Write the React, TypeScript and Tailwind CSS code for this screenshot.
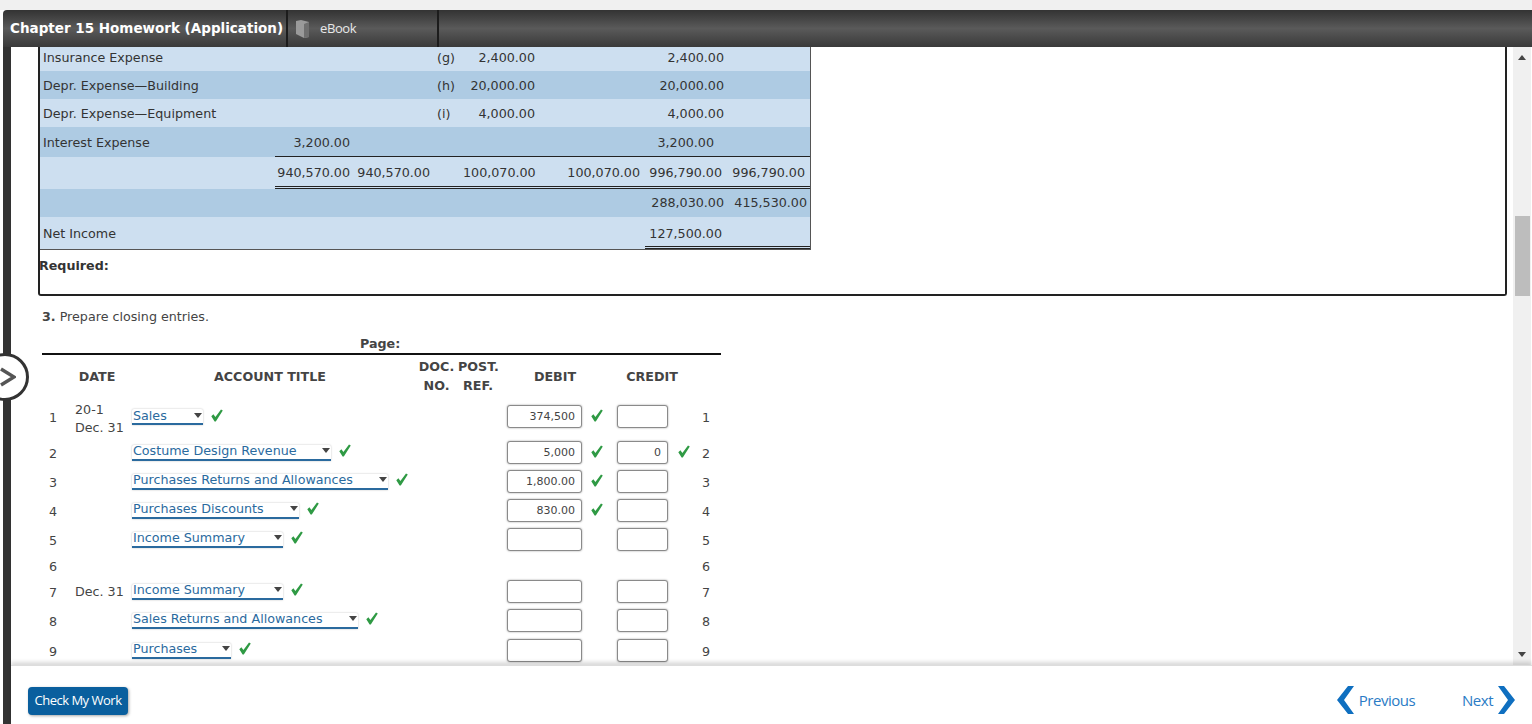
const font = "font-['DejaVu_Sans',Verdana,sans-serif]";

type WorkRow = {
  label?: string;
  h: string;
  bg: string;
  nudge?: string;
  cells: [string, string, string, string, string, string, string];
};

const LIGHT = 'bg-[#cddff0]';
const DARK = 'bg-[#aecbe3]';

const workRows: WorkRow[] = [
  { label: 'Insurance Expense', h: 'h-[24px]', bg: LIGHT, nudge: 'pb-[2px]', cells: ['', '', '(g)', '2,400.00', '', '2,400.00', ''] },
  { label: 'Depr. Expense—Building', h: 'h-[28px]', bg: DARK, nudge: 'pt-[2px]', cells: ['', '', '(h)', '20,000.00', '', '20,000.00', ''] },
  { label: 'Depr. Expense—Equipment', h: 'h-[28px]', bg: LIGHT, nudge: 'pt-[2px]', cells: ['', '', '(i)', '4,000.00', '', '4,000.00', ''] },
  { label: 'Interest Expense', h: 'h-[30px]', bg: DARK, nudge: 'pt-[2px]', cells: ['3,200.00', '', '', '', '', '3,200.00', ''] },
  { h: 'h-[32px]', bg: LIGHT, cells: ['940,570.00', '940,570.00', '', '100,070.00', '100,070.00', '996,790.00', '996,790.00'] },
  { h: 'h-[28px]', bg: DARK, cells: ['', '', '', '', '', '288,030.00', '415,530.00'] },
  { label: 'Net Income', h: 'h-[32px]', bg: LIGHT, nudge: 'pt-[2px]', cells: ['', '', '', '', '', '127,500.00', ''] },
];

type JournalRow = {
  n: number;
  h: string;
  date?: string[];
  account?: string;
  w?: string;
  debit?: string;
  debitOk?: boolean;
  credit?: string;
  noInputs?: boolean;
};

const journalRows: JournalRow[] = [
  { n: 1, h: 'h-[39px] pb-[3px]', date: ['20-1', 'Dec. 31'], account: 'Sales', w: 'w-[71px]', debit: '374,500', debitOk: true },
  { n: 2, h: 'h-[29px]', account: 'Costume Design Revenue', w: 'w-[199px]', debit: '5,000', debitOk: true, credit: '0' },
  { n: 3, h: 'h-[29px]', account: 'Purchases Returns and Allowances', w: 'w-[256px]', debit: '1,800.00', debitOk: true },
  { n: 4, h: 'h-[29px]', account: 'Purchases Discounts', w: 'w-[167px]', debit: '830.00', debitOk: true },
  { n: 5, h: 'h-[29px]', account: 'Income Summary', w: 'w-[151px]' },
  { n: 6, h: 'h-[24px]', noInputs: true },
  { n: 7, h: 'h-[27px]', date: ['Dec. 31'], account: 'Income Summary', w: 'w-[151px]' },
  { n: 8, h: 'h-[31px]', account: 'Sales Returns and Allowances', w: 'w-[226px]' },
  { n: 9, h: 'h-[29px]', account: 'Purchases', w: 'w-[99px]' },
];

function Check({ className = '' }: { className?: string }) {
  return (
    <svg width="12" height="13" viewBox="0 0 12 13" className={`shrink-0 ${className}`}>
      <path d="M0.3 7.2 L2.4 5.2 L4.4 8 L10 0.4 L11.8 1.6 L4.8 12.6 L3.6 12.6 Z" fill="#2f9a44" />
    </svg>
  );
}

function Caret({ up, className = '' }: { up?: boolean; className?: string }) {
  return (
    <svg width="8" height="5" viewBox="0 0 8 5" className={`shrink-0 ${className}`}>
      <path d={up ? 'M0 5 L4 0 L8 5 Z' : 'M0 0 L8 0 L4 5 Z'} fill="#444" />
    </svg>
  );
}

function AmountInput({ value, w }: { value?: string; w: string }) {
  return (
    <input
      readOnly
      value={value ?? ''}
      className={`${w} -mt-[3px] h-[23px] shrink-0 rounded-[3px] border border-[#8a8a8a] bg-white pr-[6px] text-right text-[11px] text-[#444] shadow-[0_0_2px_#999] outline-none ${font}`}
    />
  );
}

function WorksheetRow({ row, i }: { row: WorkRow; i: number }) {
  const c = row.cells;
  return (
    <div className={`relative flex items-center text-[12.7px] whitespace-nowrap text-[#333] ${row.h} ${row.bg} ${row.nudge ?? ''}`}>
      <div className="w-[235px] pl-[3px]">{row.label}</div>
      <div className="w-[80px] pr-[5px] text-right">{c[0]}</div>
      <div className="w-[79px] pr-[4px] text-right">{c[1]}</div>
      <div className="w-[29px] pl-[3px]">{c[2]}</div>
      <div className="w-[76px] pr-[4px] text-right">{c[3]}</div>
      <div className="w-[105px] pr-[4px] text-right">{c[4]}</div>
      <div className={`w-[82px] text-right ${i === 3 ? 'pr-[12px]' : i === 4 || i === 6 ? 'pr-[4px]' : 'pr-[2px]'}`}>{c[5]}</div>
      <div className={`w-[84px] text-right ${i === 5 ? 'pr-[3px]' : 'pr-[5px]'}`}>{c[6]}</div>
      {i === 3 && <div className="absolute bottom-0 left-[235px] right-0 h-px bg-[#222]" />}
      {i === 4 && <div className="absolute bottom-0 left-[235px] right-0 h-[3px] border-y border-[#222]" />}
      {i === 6 && <div className="absolute bottom-0 left-[605px] right-0 h-[3px] border-y border-[#222]" />}
    </div>
  );
}

function JournalLine({ row }: { row: JournalRow }) {
  return (
    <div className={`flex items-center text-[12.7px] text-[#444] ${row.h}`}>
      <div className="w-[22px] text-center">{row.n}</div>
      <div className={`w-[68px] pl-[11px] leading-[18px] whitespace-nowrap ${row.n === 1 ? 'mt-[2px]' : '-mt-[1px]'}`}>
        {row.date?.map((d) => (
          <div key={d}>{d}</div>
        ))}
      </div>
      <div className="flex w-[375px] items-center gap-[8px]">
        {row.account && (
          <>
            <div className={`-mt-[2px] flex h-[16px] items-center justify-between rounded-t-[2px] border-b-2 border-[#2a6a9e] pr-[1px] pl-[1px] leading-none text-[#2a6a9e] shadow-[0_0_2px_#bbb] ${row.w}`}>
              <span className="whitespace-nowrap">{row.account}</span>
              <Caret className="-mt-[2px]" />
            </div>
            <Check className="-mt-[6px]" />
          </>
        )}
      </div>
      <div className="flex w-[110px] items-center gap-[9px]">
        {!row.noInputs && <AmountInput value={row.debit} w="w-[75px]" />}
        {row.debitOk && <Check className="-mt-[5px]" />}
      </div>
      <div className="flex w-[84px] items-center gap-[10px]">
        {!row.noInputs && <AmountInput value={row.credit} w="w-[51px]" />}
        {row.credit && <Check className="-mt-[5px]" />}
      </div>
      <div className="w-[10px] text-center">{row.n}</div>
    </div>
  );
}

export default function App() {
  return (
    <div className={`relative flex h-[724px] w-[1532px] flex-col overflow-hidden bg-white ${font}`}>
      <div className="h-[10px] shrink-0 bg-[#f0f0f0]" />

      {/* Title bar */}
      <div className="ml-[3px] flex h-[37px] shrink-0 items-stretch rounded-tl-[4px] bg-gradient-to-b from-[#333333] via-[#5a5a5a] to-[#3a3a3a]">
        <div className="flex w-[283px] items-center pl-[7px] text-[13.5px] font-bold whitespace-nowrap text-white">
          Chapter 15 Homework (Application)
        </div>
        <div className="flex w-[153px] items-center border-x-2 border-[#1c1c1c] pl-[7px]">
          <svg width="15" height="20" viewBox="0 0 15 20">
            <path d="M1 2 L6 1 L14 3 L14 18 L9 19 L1 15 Z" fill="#9a9a9a" />
            <path d="M9 5 L14 3 L14 18 L9 19 Z" fill="#6f6f6f" />
          </svg>
          <span className="ml-[10px] font-['Open_Sans',sans-serif] text-[13px] tracking-[-0.4px] text-[#e8e8e8]">eBook</span>
        </div>
      </div>

      {/* Body */}
      <div className="flex h-[618px] shrink-0">
        <div className="ml-[3px] w-[8px] shrink-0 bg-[#333]" />
        <div className="min-w-0 flex-1 overflow-hidden">
          <div className="ml-[27px] mr-[6px] h-[249px] rounded-b-[3px] border-x-2 border-b-2 border-[#222]">
            <div className="w-[771px] border-r border-b border-[#555]">
              {workRows.map((row, i) => (
                <WorksheetRow key={i} row={row} i={i} />
              ))}
            </div>
            <div className="-ml-px pt-[7px] text-[12.7px] leading-[18px] font-bold text-[#333]">Required:</div>
          </div>

          <div className="ml-[31px] pt-[12px] text-[12.7px] leading-[18px] text-[#444]">
            <b>3.</b> Prepare closing entries.
          </div>

          <div className="ml-[31px] w-[679px]">
            <div className="mt-[9px] h-[20px] border-b-2 border-[#111] pl-[318px] text-[12.7px] leading-[17px] font-bold text-[#444]">
              Page:
            </div>
            <div className="flex h-[45px] items-center pb-[3px] text-center text-[12.7px] leading-[19px] font-bold text-[#444]">
              <div className="w-[90px] pl-[20px]">DATE</div>
              <div className="w-[283px] pr-[7px]">ACCOUNT TITLE</div>
              <div className="w-[43px]">DOC.<br />NO.</div>
              <div className="w-[40px]">POST.<br />REF.</div>
              <div className="w-[114px]">DEBIT</div>
              <div className="w-[80px]">CREDIT</div>
            </div>
            {journalRows.map((row) => (
              <JournalLine key={row.n} row={row} />
            ))}
          </div>
        </div>

        {/* Scrollbar */}
        <div className="flex w-[18px] shrink-0 flex-col items-center bg-[#f0f0f0] py-[8px]">
          <Caret up />
          <div className="mt-[156px] h-[80px] w-[15px] bg-[#bdbdbd]" />
          <div className="flex-1" />
          <Caret />
        </div>
        <div className="w-[1px] shrink-0" />
      </div>

      {/* Footer */}
      <div className="relative flex flex-1">
        <div className="ml-[3px] w-[8px] shrink-0 bg-[#333]" />
        <div className="flex flex-1 items-start justify-between border-t border-[#ddd] pt-[21px] pr-[17px] pl-[17px] shadow-[0_-3px_4px_rgba(0,0,0,0.15)]">
          <button className="h-[28px] w-[100px] rounded-[4px] bg-[#0a5f9e] font-['Open_Sans',sans-serif] text-[13px] tracking-[-0.5px] text-white shadow-[1px_1px_3px_rgba(0,0,0,0.35)]">
            Check My Work
          </button>
          <div className="-mt-[1px] flex items-center font-['Open_Sans',sans-serif] text-[15px] tracking-[-0.5px] text-[#2a7bc5]">
            <svg width="17" height="28" viewBox="0 0 17 28">
              <path d="M11 0 L17 0 L7 14 L17 28 L11 28 L0 14 Z" fill="#0f6fc0" />
            </svg>
            <span className="ml-[5px]">Previous</span>
            <span className="ml-[47px]">Next</span>
            <svg width="17" height="28" viewBox="0 0 17 28" className="ml-[5px]">
              <path d="M6 0 L0 0 L10 14 L0 28 L6 28 L17 14 Z" fill="#0f6fc0" />
            </svg>
          </div>
        </div>
      </div>

      {/* Side panel toggle */}
      <div className="absolute top-[353px] left-[-19px] flex h-[48px] w-[48px] items-center justify-center rounded-full border-[3px] border-[#333] bg-white pl-[5px]">
        <svg width="16" height="20" viewBox="0 0 16 20">
          <path d="M1 2 L14 10 L1 18" fill="none" stroke="#555" strokeWidth="3.5" />
        </svg>
      </div>
    </div>
  );
}
